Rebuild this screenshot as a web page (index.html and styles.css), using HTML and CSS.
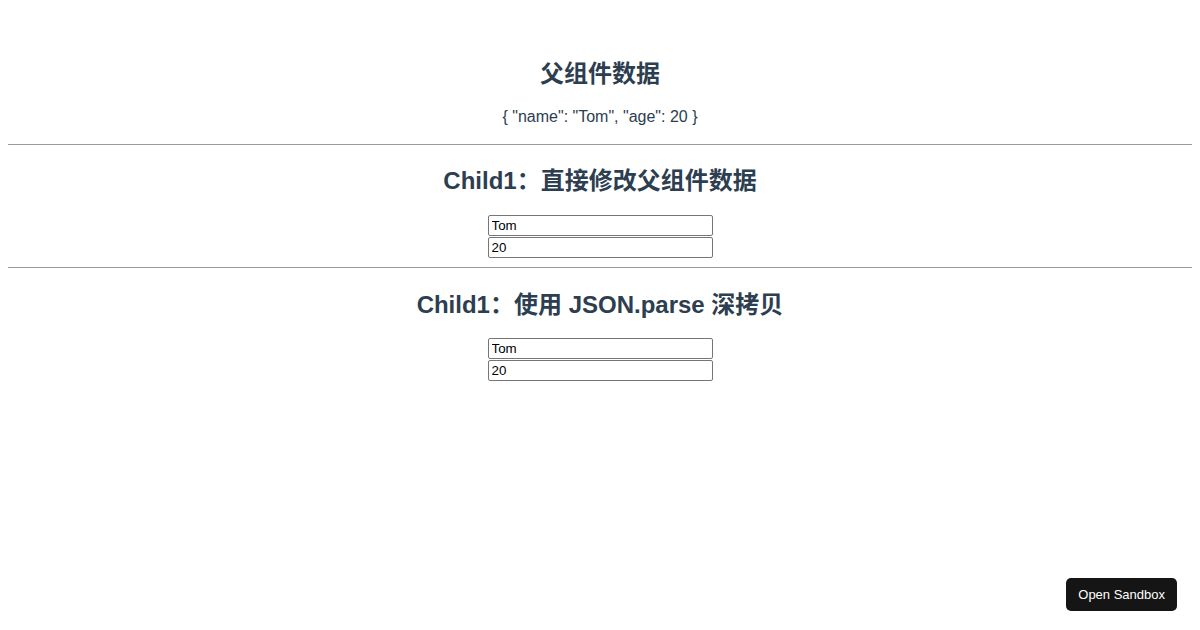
FILE: index.html
```html
<!DOCTYPE html>
<html lang="zh-CN">
<head>
<meta charset="utf-8">
<title>父组件数据</title>
<link rel="stylesheet" href="styles.css">
</head>
<body>
<div class="app">
  <h2 class="title">父组件数据</h2>
  <p class="data">{ "name": "Tom", "age": 20 }</p>
  <hr class="divider">
  <div class="child">
    <h2 class="title">Child1：直接修改父组件数据</h2>
    <div class="fields">
      <input class="field" type="text" value="Tom">
      <input class="field" type="text" value="20">
    </div>
  </div>
  <hr class="divider">
  <div class="child">
    <h2 class="title">Child1：使用 JSON.parse 深拷贝</h2>
    <div class="fields">
      <input class="field" type="text" value="Tom">
      <input class="field" type="text" value="20">
    </div>
  </div>
</div>
<button class="sandbox-btn" type="button">Open Sandbox</button>
</body>
</html>
```

FILE: styles.css
```css
body {
  margin: 8px;
  background: #ffffff;
}

.app {
  margin-top: 52px;
  text-align: center;
  color: #2c3e50;
  font-family: Avenir, Helvetica, "Liberation Sans", Arial, "Noto Sans CJK SC", sans-serif;
  -webkit-font-smoothing: antialiased;
}

.title {
  font-size: 24px;
  line-height: 27.6px;
  font-weight: bold;
  margin: 20px 0;
}

.data {
  font-size: 16px;
  line-height: 18.4px;
  margin: 20px 0 0;
}

.divider {
  margin: 18px 0 22px;
  border: 0;
  border-top: 1px solid #9a9a9a;
  height: 0;
}

.child + .divider {
  margin-top: 9px;
  margin-bottom: 23px;
}

.fields {
  display: flex;
  flex-direction: column;
  align-items: center;
  gap: 1px;
  margin-top: 20px;
}

.field {
  box-sizing: border-box;
  width: 225px;
  height: 21px;
  margin: 0;
  padding: 1px 3px;
  border: 1px solid #767676;
  border-radius: 2px;
  font-family: Arial, "Liberation Sans", sans-serif;
  font-size: 13.33px;
  color: #000000;
  background: #ffffff;
}

.sandbox-btn {
  position: fixed;
  right: 23px;
  bottom: 19px;
  height: 33px;
  padding: 0 12px;
  border: 0;
  border-radius: 5px;
  background: #151515;
  color: #ffffff;
  font-family: "Liberation Sans", Arial, sans-serif;
  font-size: 13px;
}
```
